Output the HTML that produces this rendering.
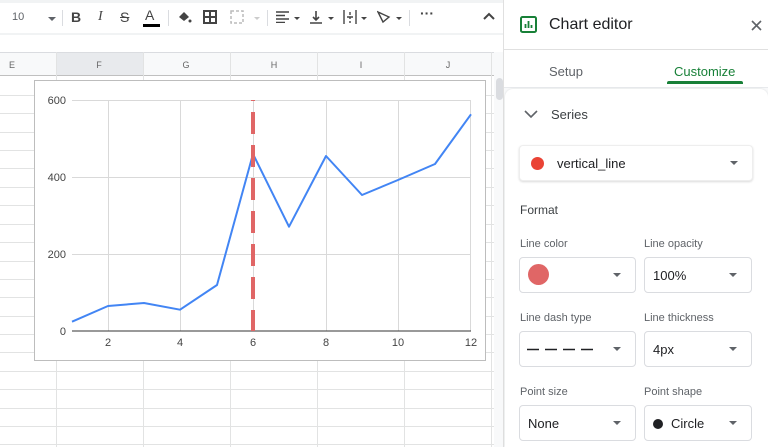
<!DOCTYPE html>
<html><head><meta charset="utf-8"><style>
*{margin:0;padding:0;box-sizing:border-box}
body{width:768px;height:447px;overflow:hidden;background:#fff;font-family:"Liberation Sans",Arial,sans-serif;position:relative;color:#3c4043}
.abs{position:absolute}
.tb{font-size:12px;color:#5f6368}
.lbl{position:absolute;font-size:11px;color:#5f6368}
.sel{position:absolute;height:36px;border:1px solid #dadce0;border-radius:4px;background:#fff}
.sel .arr{position:absolute;right:14px;top:15px;width:0;height:0;border-left:4px solid transparent;border-right:4px solid transparent;border-top:4px solid #5f6368}
.sel .t{position:absolute;left:8px;top:10px;font-size:13px;color:#202124}
</style></head><body>
<!-- toolbar -->
<div class="abs" style="left:0;top:0;width:503px;height:3px;background:#f1f3f4"></div>
<div class="abs" style="left:0;top:33px;width:503px;height:2px;background:#f1f3f4"></div>
<div class="abs tb" style="left:12px;top:11px;font-size:11px">10</div>
<div class="abs" style="left:48px;top:17px;border-left:4px solid transparent;border-right:4px solid transparent;border-top:4px solid #5f6368"></div>
<div class="abs" style="left:62px;top:10px;width:1px;height:16px;background:#dadce0"></div>
<div class="abs" style="left:71px;top:9px;font-weight:bold;font-size:14px;color:#444">B</div>
<div class="abs" style="left:98px;top:9px;font-style:italic;font-size:14px;color:#444;font-family:'Liberation Serif',serif">I</div>
<div class="abs" style="left:120px;top:9px;font-size:14px;color:#444;text-decoration:line-through">S</div>
<div class="abs" style="left:145px;top:7px;font-size:14px;color:#444">A</div>
<div class="abs" style="left:143px;top:24px;width:17px;height:3px;background:#000"></div>
<div class="abs" style="left:168px;top:10px;width:1px;height:16px;background:#dadce0"></div>
<svg class="abs" style="left:176px;top:9px" width="16" height="16"><path d="M3 8l5-5 5 5-5 4z" fill="#444"/><circle cx="14" cy="12" r="1.5" fill="#444"/></svg>
<svg class="abs" style="left:203px;top:10px" width="14" height="14"><rect x="1" y="1" width="12" height="12" fill="none" stroke="#444" stroke-width="2"/><path d="M7 1v12M1 7h12" stroke="#444" stroke-width="2"/></svg>
<svg class="abs" style="left:230px;top:10px" width="14" height="14"><rect x="1" y="1" width="12" height="12" fill="none" stroke="#bbb" stroke-width="1.5" stroke-dasharray="3 2"/></svg>
<div class="abs" style="left:254px;top:17px;border-left:3px solid transparent;border-right:3px solid transparent;border-top:3px solid #ccc"></div>
<div class="abs" style="left:267px;top:10px;width:1px;height:16px;background:#dadce0"></div>
<svg class="abs" style="left:276px;top:11px" width="14" height="12"><path d="M0 1h13M0 4.5h9M0 8h13M0 11.5h9" stroke="#444" stroke-width="1.6"/></svg>
<div class="abs" style="left:294px;top:17px;border-left:3px solid transparent;border-right:3px solid transparent;border-top:3px solid #444"></div>
<svg class="abs" style="left:310px;top:10px" width="12" height="14"><path d="M6 1v9M3 7l3 3 3-3M0 13h12" stroke="#444" stroke-width="1.6" fill="none"/></svg>
<div class="abs" style="left:328px;top:17px;border-left:3px solid transparent;border-right:3px solid transparent;border-top:3px solid #444"></div>
<svg class="abs" style="left:343px;top:10px" width="14" height="14"><path d="M1 0v14M13 0v14M7 2v3M7 7v2M7 11v2M4 7h6" stroke="#444" stroke-width="1.4" fill="none"/></svg>
<div class="abs" style="left:361px;top:17px;border-left:3px solid transparent;border-right:3px solid transparent;border-top:3px solid #444"></div>
<svg class="abs" style="left:377px;top:10px" width="14" height="14"><path d="M1 2l11 5-6 5z" stroke="#444" stroke-width="1.4" fill="none"/></svg>
<div class="abs" style="left:396px;top:17px;border-left:3px solid transparent;border-right:3px solid transparent;border-top:3px solid #444"></div>
<div class="abs" style="left:409px;top:10px;width:1px;height:16px;background:#dadce0"></div>
<div class="abs" style="left:420px;top:5px;font-size:14px;color:#444;font-weight:bold">···</div>
<svg class="abs" style="left:483px;top:12px" width="12" height="8"><path d="M1 7l5-5 5 5" stroke="#444" stroke-width="2" fill="none"/></svg>
<!-- column header -->
<div class="abs" style="left:0;top:52px;width:494px;height:24px;background:#f8f9fa;border-top:1px solid #dadce0;border-bottom:1px solid #c0c0c0"></div>
<div class="abs" style="left:56px;top:53px;width:87px;height:22px;background:#e8eaed"></div>
<svg class="abs" style="left:0;top:0" width="503" height="447">
<g stroke="#e2e3e3" stroke-width="1">
<path d="M56.5 52V447M143.5 52V447M230.5 52V447M317.5 52V447M404.5 52V447M491.5 52V447"/>
<path d="M0 95.5H494M0 113.5H494M0 132.5H494M0 150.5H494M0 168.5H494M0 187.5H494M0 205.5H494M0 224.5H494M0 242.5H494M0 261.5H494M0 279.5H494M0 297.5H494M0 316.5H494M0 334.5H494M0 352.5H494M0 371.5H494M0 389.5H494M0 408.5H494M0 426.5H494M0 444.5H494"/>
</g>
<g font-size="9" fill="#666" text-anchor="middle" font-family="Liberation Sans,Arial">
<text x="12" y="68">E</text><text x="99" y="68">F</text><text x="186" y="68">G</text><text x="274" y="68">H</text><text x="361" y="68">I</text><text x="448" y="68">J</text>
</g>
<rect x="494" y="52" width="9" height="395" fill="#f8f9fa"/>
<rect x="496" y="78" width="7" height="22" rx="3.5" fill="#dadce0"/>
<rect x="34.5" y="80.5" width="451" height="280" fill="#fff" stroke="#bdbdbd"/>
<g stroke="#d9d9d9">
<path d="M72 100.5H471M72 177.5H471M72 254.5H471"/>
<path d="M108.5 100V331M180.5 100V331M253.5 100V331M326.5 100V331M398.5 100V331M470.5 100V331"/>
</g>
<path d="M72 331H471" stroke="#333" stroke-width="1"/>
<g font-size="11" fill="#444" font-family="Liberation Sans,Arial">
<g text-anchor="end"><text x="66" y="104">600</text><text x="66" y="181">400</text><text x="66" y="258">200</text><text x="66" y="335">0</text></g>
<g text-anchor="middle"><text x="108" y="346">2</text><text x="180" y="346">4</text><text x="253" y="346">6</text><text x="326" y="346">8</text><text x="398" y="346">10</text><text x="471" y="346">12</text></g>
</g>
<path d="M72 321.7L108 306L144 303L180 309.7L217 285L253 154L289 226.7L326 156L362 195L398 180L435 164L471 114.3" stroke="#4285f4" stroke-width="2" fill="none" stroke-linejoin="round"/>
<path d="M253 100V331" stroke="#e06666" stroke-width="4" stroke-dasharray="22 11" stroke-dashoffset="-12"/>
</svg>
<!-- sidebar -->
<div class="abs" style="left:503px;top:0;width:265px;height:447px;background:#f8f9fa;border-left:1px solid #e0e0e0"></div>
<div class="abs" style="left:504px;top:0;width:264px;height:88px;background:#fff;border-bottom:1px solid #e8eaed"></div>
<div class="abs" style="left:504px;top:49px;width:264px;height:1px;background:#e0e0e0"></div>
<svg class="abs" style="left:520px;top:16px" width="17" height="17"><rect x="1" y="1" width="15" height="15" rx="1.5" fill="none" stroke="#188038" stroke-width="2"/><path d="M5.5 12V8M8.5 12V5M11.5 12V9" stroke="#188038" stroke-width="1.8"/></svg>
<div class="abs" style="left:549px;top:16px;font-size:16px;color:#202124">Chart editor</div>
<svg class="abs" style="left:751px;top:20px" width="11" height="11"><path d="M1 1l9 9M10 1l-9 9" stroke="#5f6368" stroke-width="1.6"/></svg>
<div class="abs" style="left:549px;top:64px;font-size:13px;color:#5f6368">Setup</div>
<div class="abs" style="left:674px;top:64px;font-size:13px;color:#188038">Customize</div>
<div class="abs" style="left:667px;top:81px;width:76px;height:3px;background:#188038;border-radius:2px 2px 0 0"></div>
<div class="abs" style="left:505px;top:89px;width:263px;height:358px;background:#fff;border-radius:8px 8px 0 0;box-shadow:0 0 2px rgba(0,0,0,.12)"></div>
<svg class="abs" style="left:524px;top:110px" width="14" height="9"><path d="M1 1l6 6 6-6" stroke="#5f6368" stroke-width="1.6" fill="none"/></svg>
<div class="abs" style="left:551px;top:107px;font-size:13px;color:#3c4043">Series</div>
<div class="sel" style="left:519px;top:145px;width:234px;height:36px;box-shadow:0 1px 2px rgba(0,0,0,.15);border-color:#eee">
<div class="abs" style="left:11px;top:11px;width:13px;height:13px;border-radius:50%;background:#ea4335"></div>
<div class="t" style="left:37px;top:10px;font-size:13px">vertical_line</div><div class="arr"></div></div>
<div class="abs" style="left:520px;top:203px;font-size:12px;color:#3c4043">Format</div>
<div class="lbl" style="left:520px;top:238px">Line color</div>
<div class="lbl" style="left:644px;top:238px">Line opacity</div>
<div class="sel" style="left:519px;top:257px;width:117px"><div class="abs" style="left:8px;top:6px;width:21px;height:21px;border-radius:50%;background:#e06666"></div><div class="arr"></div></div>
<div class="sel" style="left:644px;top:257px;width:108px"><div class="t">100%</div><div class="arr"></div></div>
<div class="lbl" style="left:520px;top:312px">Line dash type</div>
<div class="lbl" style="left:644px;top:312px">Line thickness</div>
<div class="sel" style="left:519px;top:331px;width:117px"><svg class="abs" style="left:7px;top:16px" width="70" height="3"><path d="M0 1.5h66" stroke="#202124" stroke-width="1.5" stroke-dasharray="12 6"/></svg><div class="arr"></div></div>
<div class="sel" style="left:644px;top:331px;width:108px"><div class="t">4px</div><div class="arr"></div></div>
<div class="lbl" style="left:520px;top:386px">Point size</div>
<div class="lbl" style="left:644px;top:386px">Point shape</div>
<div class="sel" style="left:519px;top:405px;width:117px"><div class="t">None</div><div class="arr"></div></div>
<div class="sel" style="left:644px;top:405px;width:108px"><div class="abs" style="left:8px;top:13px;width:10px;height:10px;border-radius:50%;background:#202124"></div><div class="t" style="left:26px">Circle</div><div class="arr"></div></div>
</body></html>
